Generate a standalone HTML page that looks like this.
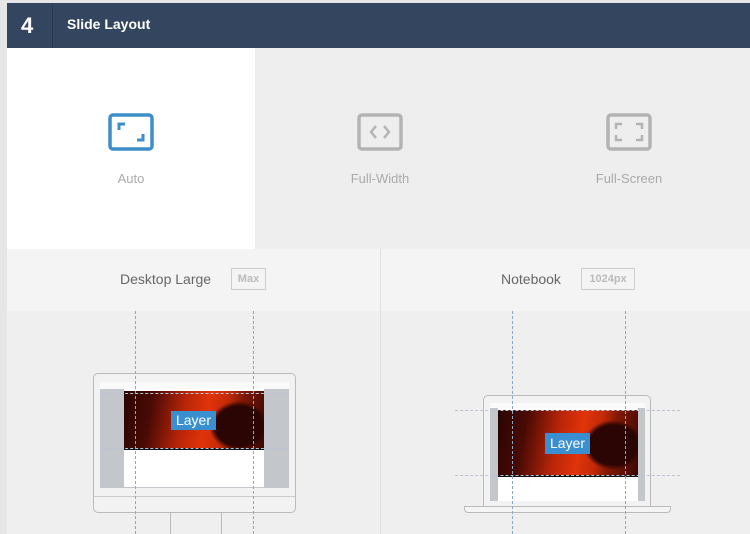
<!DOCTYPE html>
<html style="width:750px;height:534px;overflow:hidden"><head><style>
*{margin:0;padding:0;box-sizing:border-box}
body{width:750px;height:534px;background:#e6e6e6;font-family:"Liberation Sans",sans-serif;position:relative;overflow:hidden}
.a{position:absolute}
.red{background:radial-gradient(ellipse 30px 25px at 115px 35px,#2a0503 0%,#2a0503 80%,transparent 100%),linear-gradient(100deg,#2a0502 0%,#4a0a04 20%,#b82508 42%,#e0340a 58%,#c42a08 70%,#801804 80%,#3a0804 100%)}
.lay{background:#3a8fd0;color:#fff;font-size:14px;text-align:center}
.dv{border-left:1px dashed #8aa6c8}
.dh{border-top:1px dashed #b8c4d4}
</style></head><body>
<div class="a" style="left:7px;top:3px;width:743px;height:45px;background:#344560"></div>
<div class="a" style="left:52px;top:3px;width:1px;height:45px;background:#2a3a52"></div>
<div class="a" style="left:21px;top:13px;color:#fff;font-weight:bold;font-size:22px">4</div>
<div class="a" style="left:67px;top:16px;color:#fff;font-weight:bold;font-size:14px">Slide Layout</div>

<div class="a" style="left:7px;top:48px;width:743px;height:201px;background:#eeeeee"></div>
<div class="a" style="left:7px;top:48px;width:248px;height:201px;background:#fff"></div>
<svg class="a" style="left:108px;top:113px" width="46" height="38"><rect x="2" y="2" width="42" height="34" rx="3" fill="none" stroke="#3d8ec9" stroke-width="3.5"/><path d="M11 17V11H17M35 21V27H29" fill="none" stroke="#3d8ec9" stroke-width="3"/></svg>
<div class="a" style="left:7px;top:171px;width:248px;text-align:center;color:#aaa;font-size:13px">Auto</div>
<svg class="a" style="left:357px;top:113px" width="46" height="38"><rect x="2" y="2" width="42" height="34" rx="3" fill="none" stroke="#b3b3b3" stroke-width="3.5"/><path d="M19 13L14 19L19 25M27 13L32 19L27 25" fill="none" stroke="#b3b3b3" stroke-width="2.5"/></svg>
<div class="a" style="left:300px;top:171px;width:160px;text-align:center;color:#aaa;font-size:13px">Full-Width</div>
<svg class="a" style="left:606px;top:113px" width="46" height="38"><rect x="2" y="2" width="42" height="34" rx="3" fill="none" stroke="#b3b3b3" stroke-width="3.5"/><path d="M10 16V11H16M30 11H36V16M36 22V27H30M16 27H10V22" fill="none" stroke="#b3b3b3" stroke-width="2.5"/></svg>
<div class="a" style="left:549px;top:171px;width:160px;text-align:center;color:#aaa;font-size:13px">Full-Screen</div>

<div class="a" style="left:7px;top:249px;width:743px;height:62px;background:#f4f4f4"></div>
<div class="a" style="left:7px;top:311px;width:743px;height:223px;background:#efefef"></div>
<div class="a" style="left:380px;top:249px;width:1px;height:285px;background:#e0e0e0"></div>
<div class="a" style="left:120px;top:271px;color:#666;font-size:14px">Desktop Large</div>
<div class="a" style="left:231px;top:268px;width:35px;height:22px;border:1px solid #ccc;color:#bbb;font-size:11px;font-weight:bold;text-align:center;line-height:20px">Max</div>
<div class="a" style="left:501px;top:271px;color:#666;font-size:14px">Notebook</div>
<div class="a" style="left:581px;top:268px;width:54px;height:22px;border:1px solid #ccc;color:#bbb;font-size:11px;font-weight:bold;text-align:center;line-height:20px">1024px</div>

<!-- desktop -->
<div class="a" style="left:170px;top:512px;width:52px;height:22px;border-left:1px solid #bbb;border-right:1px solid #bbb"></div>
<div class="a" style="left:93px;top:373px;width:203px;height:140px;border:1px solid #bbb;border-radius:5px;background:#f2f2f2"></div>
<div class="a" style="left:94px;top:496px;width:201px;height:1px;background:#ccc"></div>
<div class="a" style="left:100px;top:382px;width:189px;height:106px;background:#c3c6ca"></div>
<div class="a" style="left:100px;top:382px;width:189px;height:7px;background:#fafafa"></div>
<div class="a" style="left:124px;top:389px;width:140px;height:98px;background:#fff"></div>
<div class="a red" style="left:124px;top:391px;width:140px;height:59px;border-bottom:2px solid #111"></div>
<div class="a lay" style="left:171px;top:411px;width:45px;height:19px;line-height:19px">Layer</div>
<div class="a dv" style="left:135px;top:311px;height:223px"></div>
<div class="a dv" style="left:253px;top:311px;height:223px"></div>
<div class="a dh" style="left:100px;top:393px;width:189px"></div>
<div class="a dh" style="left:100px;top:448px;width:189px"></div>

<!-- laptop -->
<div class="a" style="left:483px;top:395px;width:168px;height:112px;border:1px solid #bbb;border-radius:5px 5px 0 0;background:#f2f2f2"></div>
<div class="a" style="left:490px;top:403px;width:155px;height:98px;background:#c3c6ca"></div>
<div class="a" style="left:490px;top:403px;width:155px;height:5px;background:#fafafa"></div>
<div class="a" style="left:498px;top:408px;width:140px;height:93px;background:#fff"></div>
<div class="a red" style="left:498px;top:410px;width:140px;height:67px;border-bottom:2px solid #111"></div>
<div class="a lay" style="left:545px;top:433px;width:45px;height:21px;line-height:21px">Layer</div>
<div class="a" style="left:464px;top:506px;width:207px;height:7px;border:1px solid #bbb;border-radius:0 0 4px 4px;background:#f4f4f4"></div>
<div class="a dv" style="left:512px;top:311px;height:223px"></div>
<div class="a dv" style="left:625px;top:311px;height:223px"></div>
<div class="a dh" style="left:455px;top:410px;width:225px"></div>
<div class="a dh" style="left:455px;top:475px;width:225px"></div>
</body></html>
